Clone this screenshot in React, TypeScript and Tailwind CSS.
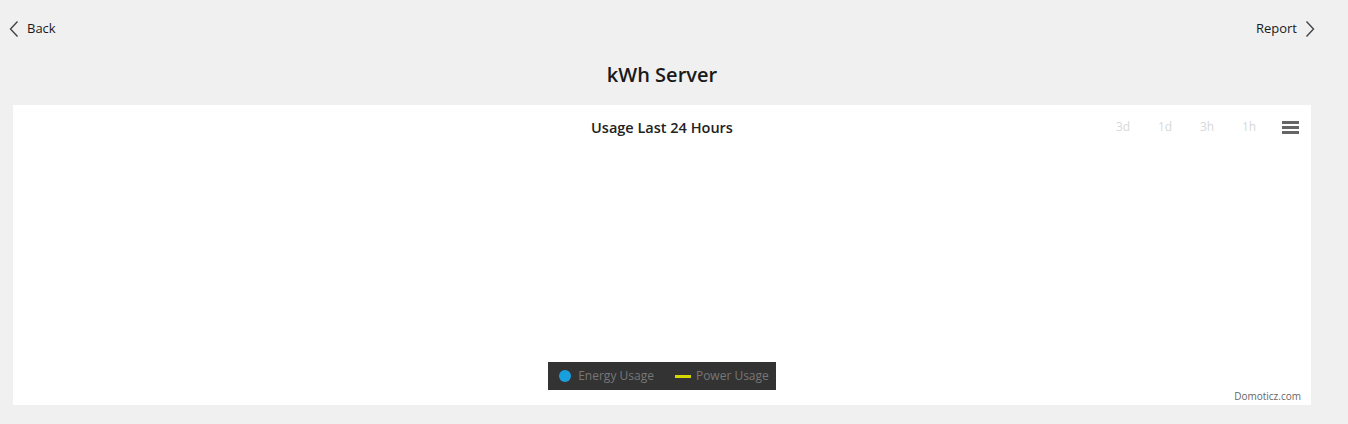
function Chevron({ dir }: { dir: 'left' | 'right' }) {
  return (
    <svg width="10" height="18" viewBox="0 0 10 18" fill="none" stroke="#444" strokeWidth="1.4">
      {dir === 'left' ? <polyline points="8.5,1.5 1.5,9 8.5,16.5" /> : <polyline points="1.5,1.5 8.5,9 1.5,16.5" />}
    </svg>
  )
}

export default function App() {
  return (
    <div className="min-h-[424px] bg-[#f0f0f0] font-['Open_Sans',sans-serif] text-[#1a1a1a]">
      <div className="w-[1324px]">
        <div className="flex items-center justify-between pl-[9px] pt-[17px] h-[40px]">
          <a className="flex items-center gap-[8px] text-[13px] text-[#1a1a1a]">
            <Chevron dir="left" />
            <span>Back</span>
          </a>
          <a className="flex items-center gap-[8px] pr-[9px] text-[13px] text-[#1a1a1a]">
            <span>Report</span>
            <Chevron dir="right" />
          </a>
        </div>
        <h2 className="mt-[20px] text-center text-[20px] font-semibold leading-[30px]">kWh Server</h2>
        <div className="mx-[13px] mt-[15px] h-[300px] bg-white flex flex-col">
          <div className="relative h-[48px] flex items-start justify-center pt-[12px]">
            <span className="text-[14.5px] font-semibold text-[#222]">Usage Last 24 Hours</span>
            <div className="absolute right-[12px] top-[13px] flex items-center">
              {['3d', '1d', '3h', '1h'].map((z) => (
                <span key={z} className="w-[42px] text-center text-[12px] text-[#d8d8d8]">
                  {z}
                </span>
              ))}
              <span className="ml-[12px] flex flex-col gap-[2px]">
                <span className="block h-[3px] w-[17px] bg-[#666]" />
                <span className="block h-[3px] w-[17px] bg-[#666]" />
                <span className="block h-[3px] w-[17px] bg-[#666]" />
              </span>
            </div>
          </div>
          <div className="flex-1" />
          <div className="flex justify-center">
            <div className="flex items-center h-[28px] bg-[#333] pl-[11px] pr-[7px] gap-[21px] text-[12px] text-[#777]">
              <span className="flex items-center gap-[7px]">
                <span className="block h-[12px] w-[12px] rounded-full bg-[#1a9fde]" />
                Energy Usage
              </span>
              <span className="flex items-center gap-[5px]">
                <span className="block h-[3px] w-[16px] bg-[#d6d600]" />
                Power Usage
              </span>
            </div>
          </div>
          <div className="h-[15px] flex justify-end pr-[10px]">
            <span className="text-[10px] leading-[13px] text-[#666]">Domoticz.com</span>
          </div>
        </div>
      </div>
    </div>
  )
}
